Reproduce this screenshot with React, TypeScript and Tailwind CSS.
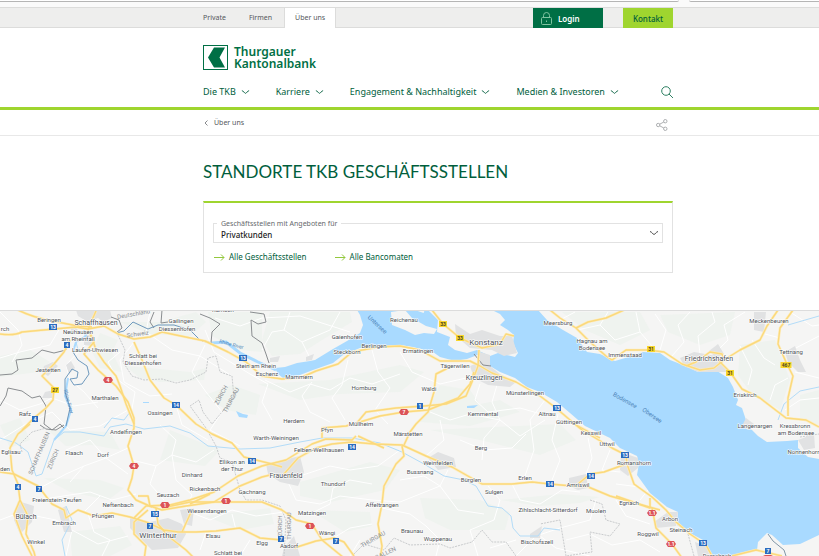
import React from "react";

type Label = { t: string; x: number; y: number; size?: number };

const navItems = [
  { name: "Die TKB" },
  { name: "Karriere" },
  { name: "Engagement & Nachhaltigkeit" },
  { name: "Medien & Investoren" },
];

// Town names, x is the centre of the text and y its baseline
const towns: Label[] = [
  { t: "Beringen", x: 49, y: 322 },
  { t: "Schaffhausen", x: 96, y: 325, size: 7 },
  { t: "rch", x: 5, y: 331 },
  { t: "Neuhausen", x: 78, y: 334 },
  { t: "am Rheinfall", x: 78, y: 341 },
  { t: "Laufen-Uhwiesen", x: 95, y: 352 },
  { t: "Gailingen", x: 181, y: 323 },
  { t: "Diessenhofen", x: 177, y: 331 },
  { t: "Schlatt bei", x: 143, y: 358 },
  { t: "Diessenhofen", x: 143, y: 365 },
  { t: "Jestetten", x: 48, y: 372 },
  { t: "Marthalen", x: 105, y: 400 },
  { t: "Rafz", x: 25, y: 416 },
  { t: "Ossingen", x: 160, y: 415 },
  { t: "Ramsen", x: 223, y: 312 },
  { t: "Stein am Rhein", x: 256, y: 368 },
  { t: "Eschenz", x: 267, y: 376 },
  { t: "Mammern", x: 299, y: 379 },
  { t: "Gaienhofen", x: 347, y: 339 },
  { t: "Steckborn", x: 347, y: 354 },
  { t: "Berlingen", x: 374, y: 348 },
  { t: "Reichenau", x: 404, y: 322 },
  { t: "Ermatingen", x: 418, y: 353 },
  { t: "Homburg", x: 364, y: 390 },
  { t: "Herdern", x: 294, y: 423 },
  { t: "Müllheim", x: 361, y: 426 },
  { t: "Pfyn", x: 327, y: 432 },
  { t: "Konstanz", x: 486, y: 345, size: 8 },
  { t: "Tägerwilen", x: 455, y: 368 },
  { t: "Kreuzlingen", x: 484, y: 380, size: 7 },
  { t: "Wäldi", x: 429, y: 391 },
  { t: "Münsterlingen", x: 525, y: 395 },
  { t: "Kemmental", x: 483, y: 416 },
  { t: "Altnau", x: 547, y: 416 },
  { t: "Güttingen", x: 569, y: 424 },
  { t: "Meersburg", x: 558, y: 325 },
  { t: "Hagnau am", x: 592, y: 343 },
  { t: "Bodensee", x: 592, y: 350 },
  { t: "Immenstaad", x: 625, y: 357 },
  { t: "Friedrichshafen", x: 709, y: 361, size: 7 },
  { t: "Meckenbeuren", x: 769, y: 323 },
  { t: "Tettnang", x: 791, y: 354 },
  { t: "Eriskirch", x: 745, y: 397 },
  { t: "Langenargen", x: 755, y: 428 },
  { t: "Kressbronn", x: 795, y: 428 },
  { t: "am Bodensee", x: 796, y: 435 },
  { t: "Nonnenhorn", x: 804, y: 454 },
  { t: "Andelfingen", x: 126, y: 434 },
  { t: "Eglisau", x: 11, y: 454 },
  { t: "den", x: 5, y: 471 },
  { t: "Flaach", x: 74, y: 455 },
  { t: "Dorf", x: 103, y: 457 },
  { t: "Dinhard", x: 192, y: 477 },
  { t: "Rickenbach", x: 205, y: 491 },
  { t: "Seuzach", x: 168, y: 497 },
  { t: "Freienstein-Teufen", x: 57, y: 502 },
  { t: "Neftenbach", x: 118, y: 507 },
  { t: "Bülach", x: 26, y: 519, size: 7 },
  { t: "Pfungen", x: 103, y: 518 },
  { t: "Embrach", x: 64, y: 525 },
  { t: "Wiesendangen", x: 207, y: 513 },
  { t: "Winterthur", x: 158, y: 538, size: 8 },
  { t: "Winkel", x: 36, y: 544 },
  { t: "Warth-Weiningen", x: 276, y: 440 },
  { t: "Felben-Wellhausen", x: 319, y: 452 },
  { t: "Märstetten", x: 408, y: 436 },
  { t: "Ellikon an", x: 232, y: 464 },
  { t: "der Thur", x: 232, y: 471 },
  { t: "Frauenfeld", x: 286, y: 478, size: 7 },
  { t: "Thundorf", x: 333, y: 486 },
  { t: "Gachnang", x: 252, y: 494 },
  { t: "Affeltrangen", x: 382, y: 507 },
  { t: "Matzingen", x: 312, y: 515 },
  { t: "Wängi", x: 327, y: 535 },
  { t: "Elsau", x: 213, y: 538 },
  { t: "Elgg", x: 262, y: 545 },
  { t: "Aadorf", x: 289, y: 548 },
  { t: "Schlatt bei", x: 228, y: 555 },
  { t: "Braunau", x: 412, y: 533 },
  { t: "Wuppenau", x: 438, y: 541 },
  { t: "Berg", x: 481, y: 450 },
  { t: "Weinfelden", x: 438, y: 465 },
  { t: "Bussnang", x: 420, y: 474 },
  { t: "Bürglen", x: 471, y: 482 },
  { t: "Erlen", x: 525, y: 480 },
  { t: "Sulgen", x: 494, y: 494 },
  { t: "Amriswil", x: 578, y: 487 },
  { t: "Zihlschlacht-Sitterdorf", x: 548, y: 512 },
  { t: "Muolen", x: 596, y: 513 },
  { t: "Bischofszell", x: 537, y: 544 },
  { t: "Kesswil", x: 591, y: 435 },
  { t: "Uttwil", x: 607, y: 446 },
  { t: "Romanshorn", x: 634, y: 465 },
  { t: "Egnach", x: 629, y: 505 },
  { t: "Arbon", x: 670, y: 521 },
  { t: "Steinach", x: 681, y: 532 },
  { t: "Roggwil", x: 648, y: 536 },
  { t: "Rorschach", x: 717, y: 558 },
];

const regions = [
  { t: "Deutschland", x: 134, y: 316, r: -10 },
  { t: "Schweiz", x: 138, y: 336, r: -8 },
  { t: "SCHAFFHAUSEN", x: 41, y: 454, r: -67 },
  { t: "ZÜRICH", x: 55, y: 460, r: -67 },
  { t: "ZÜRICH", x: 223, y: 396, r: -62 },
  { t: "THURGAU", x: 233, y: 401, r: -62 },
  { t: "ZÜRICH", x: 282, y: 526, r: -90 },
  { t: "THURGAU", x: 291, y: 526, r: -90 },
  { t: "THURGAU", x: 374, y: 541, r: -30 },
  { t: "ST. GALLEN", x: 382, y: 557, r: -25 },
];

const shields = [
  { n: "13", x: 53, y: 327, kind: "blue" },
  { n: "4", x: 67, y: 345, kind: "blue" },
  { n: "14", x: 176, y: 405, kind: "blue" },
  { n: "4", x: 35, y: 419, kind: "blue" },
  { n: "13", x: 243, y: 358, kind: "blue" },
  { n: "1", x: 420, y: 406, kind: "blue" },
  { n: "13", x: 557, y: 408, kind: "blue" },
  { n: "14", x: 252, y: 461, kind: "blue" },
  { n: "14", x: 352, y: 447, kind: "blue" },
  { n: "14", x: 550, y: 484, kind: "blue" },
  { n: "14", x: 591, y: 476, kind: "blue" },
  { n: "13", x: 625, y: 455, kind: "blue" },
  { n: "13", x: 703, y: 543, kind: "blue" },
  { n: "7", x: 768, y: 551, kind: "blue" },
  { n: "4", x: 18, y: 487, kind: "blue" },
  { n: "7", x: 39, y: 489, kind: "blue" },
  { n: "15", x: 155, y: 514, kind: "blue" },
  { n: "7", x: 150, y: 526, kind: "blue" },
  { n: "7", x: 281, y: 539, kind: "blue" },
  { n: "7", x: 336, y: 541, kind: "blue" },
  { n: "27", x: 55, y: 390, kind: "yellow" },
  { n: "33", x: 443, y: 324, kind: "yellow" },
  { n: "33", x: 460, y: 338, kind: "yellow" },
  { n: "31", x: 651, y: 349, kind: "yellow" },
  { n: "31", x: 730, y: 373, kind: "yellow" },
  { n: "467", x: 786, y: 365, kind: "yellow" },
  { n: "4", x: 108, y: 380, kind: "red" },
  { n: "7", x: 404, y: 412, kind: "red" },
  { n: "4", x: 134, y: 466, kind: "red" },
  { n: "1", x: 165, y: 505, kind: "red" },
  { n: "1", x: 226, y: 501, kind: "red" },
  { n: "1", x: 310, y: 526, kind: "red" },
  { n: "1.1", x: 652, y: 513, kind: "red" },
  { n: "1.1", x: 671, y: 544, kind: "red" },
];

const greens = [
  "M0 356L30 350L50 362L38 372L0 377Z",
  "M100 333L118 340L112 352L122 372L100 368L92 352Z",
  "M125 366L150 368L190 372L206 368L204 380L160 382L140 378Z",
  "M120 322L160 322L196 312L206 322L190 336L150 334Z",
  "M208 312L262 312L262 352L240 350L212 336Z",
  "M270 312L350 312L352 322L322 340L300 354L272 356L262 340Z",
  "M205 395L232 385L260 395L256 415L226 410Z",
  "M258 384L330 380L400 365L424 372L400 392L340 394L300 400Z",
  "M440 385L470 390L480 404L500 400L520 412L470 426L420 422Z",
  "M562 312L640 312L650 330L620 345L585 330Z",
  "M660 315L735 312L730 335L700 345L668 332Z",
  "M740 345L775 340L790 380L780 410L750 392L738 375Z",
  "M800 395L819 390L819 425L800 420Z",
  "M0 425L20 418L30 440L10 448Z",
  "M48 430L110 432L120 450L92 445L66 446Z",
  "M44 478L100 480L124 488L108 500L70 492Z",
  "M70 532L120 526L132 545L110 556L72 556Z",
  "M170 430L220 450L205 466L160 460Z",
  "M300 482L370 462L400 470L385 490L330 502L300 496Z",
  "M310 510L370 512L372 526L345 532Z",
  "M205 516L270 508L274 524L240 530Z",
  "M420 498L480 500L510 512L505 530L450 530L425 518Z",
  "M500 500L560 494L600 497L580 503L540 506Z",
  "M430 430L560 424L576 440L540 455L480 440Z",
];

const cities = [
  "M76 310L110 310L112 318L103 322L98 318L88 322L78 316Z",
  "M84 334L94 336L92 346L84 345Z",
  "M44 366L53 362L58 366L48 376L42 372Z",
  "M66 365L71 361L75 368L69 374Z",
  "M45 392L54 390L52 398L42 398Z",
  "M455 324L470 334L482 330L500 336L512 336L517 353L504 356L492 350L470 348L456 336Z",
  "M480 352L490 355L490 366L500 374L516 382L510 387L488 385L474 378L470 366L480 362Z",
  "M680 358L694 352L716 356L728 372L712 372L698 372L684 366Z",
  "M709 351L718 344L724 354L716 358Z",
  "M785 352L795 346L800 360L806 372L798 372L788 362Z",
  "M754 312L766 312L764 332L754 330Z",
  "M18 501L34 506L32 522L20 534L14 520Z",
  "M130 516L150 522L168 518L182 524L186 534L178 548L152 550L140 538L130 528Z",
  "M180 510L194 508L192 526L184 524Z",
  "M58 510L66 506L72 532L64 532Z",
  "M266 464L300 456L304 472L298 486L280 482L268 474Z",
  "M284 548L294 536L300 556L282 556Z",
  "M428 458L438 452L454 458L456 467L438 470Z",
  "M569 478L586 474L588 488L578 490L569 486Z",
  "M621 452L638 458L638 468L628 476L620 470Z",
  "M654 522L668 512L678 512L676 526L656 528Z",
  "M530 534L542 526L540 538L530 538Z",
  "M695 542L706 546L710 556L698 556Z",
  "M798 440L814 434L815 448L804 450Z",
  "M746 418L754 424L748 430L742 426Z",
  "M72 324L78 330L70 334Z",
  "M270 358L280 356L278 362L270 362Z",
  "M306 357L314 354L312 360L306 361Z",
];

const minorRoads = [
  "M0 312L18 330L22 345L12 362",
  "M60 328L50 345L20 352L0 358",
  "M85 345L66 365L70 380L84 392L98 408",
  "M120 352L108 362L118 380L135 392L130 420",
  "M134 342L120 360L124 382L150 396L172 394",
  "M150 312L146 332L172 350L200 356L232 376",
  "M205 330L214 352L250 374L268 384L262 402L272 420",
  "M205 345L192 372L206 392L222 412L210 430L240 446",
  "M265 380L290 392L310 384L330 390L350 378L372 384L400 374",
  "M312 382L302 396L310 412L330 422",
  "M348 360L342 385L332 398L345 420",
  "M372 350L378 372L390 388L375 410L388 424",
  "M400 352L412 372L440 384L466 378",
  "M262 350L272 332L284 330L302 342L310 358",
  "M215 318L240 326L262 318L300 316L350 332",
  "M284 330L290 312M302 342L330 330L340 312",
  "M480 384L475 400L488 412L520 408L548 416",
  "M497 385L492 402L500 420L484 438L482 460",
  "M430 412L450 420L470 414L500 420L520 436L545 420",
  "M545 400L530 420L534 450L525 476",
  "M558 414L552 440L560 460L552 480",
  "M588 438L592 458L586 474",
  "M610 450L602 470L620 472",
  "M560 320L575 312M577 330L600 325L615 340L640 332L652 346",
  "M600 325L608 312M640 332L636 312M660 350L666 330L655 314",
  "M672 356L684 342L678 325L690 312",
  "M700 354L698 336L715 322L712 312",
  "M714 354L728 340L724 325L745 312",
  "M752 340L764 358L775 365M740 346L752 370L748 385",
  "M765 334L780 338M790 312L812 326L819 325M792 350L819 336",
  "M795 372L819 378M785 410L800 400L819 398M770 400L775 385L788 378",
  "M0 400L20 410L40 404L52 398L74 406L98 402",
  "M0 440L26 424L52 412L70 430L100 426L128 410",
  "M66 450L90 440L106 458L128 448",
  "M70 482L84 466L106 458L128 474M40 488L66 474L84 466",
  "M50 498L90 492L112 500L136 494M84 512L100 496",
  "M0 520L16 514M26 514L56 520L72 530L66 556M72 530L98 544L128 536",
  "M88 514L94 532L110 540L102 556",
  "M132 460L156 466L172 455L196 462L214 450",
  "M156 466L150 484L164 500M172 455L176 480L192 495L186 508",
  "M160 425L176 440L172 455M176 405L182 425L208 440",
  "M190 512L210 520L232 510L256 516L284 512",
  "M236 530L232 514M206 532L200 550M250 540L240 556",
  "M288 482L296 500L320 504L340 496L372 500",
  "M300 476L330 466L350 470L378 466L400 450",
  "M333 488L350 480L372 484M333 488L330 504L314 512",
  "M372 500L400 502L420 494L440 486L448 470",
  "M382 508L410 514L426 526L440 540L436 556",
  "M400 480L424 476L440 486L458 510L484 514",
  "M488 486L500 500L494 520L470 530L478 556",
  "M512 484L520 500L540 504L562 490L580 492",
  "M460 440L484 450L512 448L526 434M426 456L444 440L440 420",
  "M596 500L590 520L560 528L536 536L516 556",
  "M616 484L640 487M616 500L626 516L650 524M640 500L648 490",
  "M566 540L590 534L612 545L640 540L660 552",
  "M330 540L350 528L372 524M350 556L360 540",
  "M540 536L556 548L590 556M516 540L490 548",
];

const highways = [
  "M18 310Q32 317 52 321L78 326L92 327",
  "M0 334Q14 336 22 332L76 327L88 329L104 326L118 334L134 339L150 337L162 332L176 335L205 341L228 352L246 362L262 376L282 379L300 378L316 371L338 364L352 352L378 347L400 346L420 350L440 361L470 361L480 366L492 373L516 382L540 396L556 408L570 420L582 430L612 448L626 455L627 464L634 484L652 497L666 510L676 522L690 534L706 545L712 556",
  "M96 311L92 320L88 330L94 342L84 354L98 370L116 386L128 402L134 418L134 428L128 446L134 466L132 478L128 490L136 500L152 507",
  "M90 332L96 350L104 362L116 376L120 386L126 404L134 424",
  "M134 342L142 360L150 380L164 398L176 405L196 424L212 434L232 443L244 457L272 464L282 467",
  "M70 340L64 352L54 364L42 376L54 388L53 400L46 408L34 418L22 430",
  "M30 424L18 434L10 448L12 470L18 484L20 500L28 516L26 534L34 552L36 560",
  "M0 472L14 474L38 486L52 504L64 510L66 518L78 510L94 516L112 513L130 517L146 522L164 530L178 532L196 532L216 531L240 528L260 538L282 540",
  "M20 500L14 514L22 536L32 556",
  "M134 518L146 506L170 505L190 500L214 492L238 476L262 466L286 460L312 444L326 439L352 440L356 436",
  "M148 510L134 522L134 534L146 546L144 560",
  "M156 508L158 524L168 536L186 550L196 560",
  "M138 496L148 496L150 506L162 510L186 506L214 502L240 486L262 477L274 474",
  "M162 508L190 502L226 502L262 502L282 510L296 520L312 524L322 540L344 558",
  "M284 474L298 458L316 448L332 444L352 442L374 444L402 445L426 456L452 467L482 484L512 484L532 482L550 484L572 486L586 486L610 496L660 510",
  "M322 438L322 428L346 426L360 422L380 416L404 412L428 410L458 398L470 384L474 372",
  "M358 436L384 448M356 424L366 412L396 408L424 406L446 404L466 396L472 382L478 366L479 350",
  "M404 445L410 432L416 424L428 412L434 392L436 374L452 366",
  "M402 446L404 456L396 464L384 486L382 504L378 524L382 546L380 560",
  "M578 484L590 474L604 472L626 464",
  "M616 496L650 508L650 498M652 508L656 528L672 544L682 558",
  "M432 310L443 324L460 338L482 348L500 344L506 334L514 336",
  "M550 310L560 318L576 328L590 342L606 356L612 360L626 350L648 350L664 352L682 364L700 370L714 368L724 360L722 354L710 352L696 362L686 366",
  "M576 328L588 322L606 318L624 310",
  "M718 360L730 372L742 389L760 398L786 418L806 420L819 427",
  "M724 360L740 350L760 340L767 326L778 310",
  "M793 310L780 328L778 344L786 362L793 376L788 398L788 416",
  "M294 548L316 541L334 538L344 542L354 556",
  "M732 556L756 550L782 556",
  "M576 425L600 438",
  "M190 504L210 494M182 532L192 510",
];

// Shared chevron used by the main nav and the select
const Chevron = ({ className }: { className?: string }) => (
  <svg viewBox="0 0 10 6" className={className} fill="none" stroke="currentColor" aria-hidden="true">
    <path d="M1 1.5C3 2 4 4.5 5 4.5S7 2 9 1.5" strokeWidth="1" />
  </svg>
);

const Arrow = () => (
  <svg viewBox="0 0 11 8" className="h-2 w-[11px] text-[#93c83d]" fill="none" stroke="currentColor" aria-hidden="true">
    <path d="M0 4.5H10M7 1.5L10 4.5L7 7.5" strokeWidth="1" />
  </svg>
);

const Logo = () => (
  <a href="#" className="flex w-fit items-center gap-[6px] text-[#006f45]">
    <svg viewBox="0 0 25 25" className="size-[25px]" aria-hidden="true">
      <rect x="0.5" y="0.5" width="24" height="24" fill="white" stroke="currentColor" />
      <path d="M11 2.5H22L16.5 12.5L22 22.5H11L5 12.5Z" fill="currentColor" />
    </svg>
    <span className="text-[12px] leading-[12px] font-semibold">
      <span className="block">Thurgauer</span>
      <span className="block">Kantonalbank</span>
    </span>
  </a>
);

function Shield({ n, x, y, kind }: { n: string; x: number; y: number; kind: string }) {
  const w = n.length > 2 ? 11 : n.length > 1 ? 8 : 6;
  return (
    <g>
      {kind === "red" ? (
        <path d={`M${x - 5} ${y}l2 -3h6l2 3l-2 3h-6Z`} fill="#dc5358" />
      ) : (
        <rect x={x - w / 2} y={y - 3} width={w} height="6" fill={kind === "blue" ? "#2b6cbf" : "#f8d62c"} />
      )}
      <text x={x} y={y + 2} textAnchor="middle" fontSize="5" fontWeight="700" fill={kind === "yellow" ? "#4b4520" : "#ffffff"}>
        {n}
      </text>
    </g>
  );
}

const BankMap = () => (
  <svg
    viewBox="0 310 819 246"
    className="block h-auto w-full bg-[#f5f5f4] font-[Roboto,sans-serif]"
    role="img"
    aria-label="Karte"
  >
    <g fill="#eff3ef">
      {greens.map((d) => (
        <path key={d} d={d} />
      ))}
    </g>
    <g fill="none" stroke="#ffffff" strokeWidth="1">
      {minorRoads.map((d) => (
        <path key={d} d={d} />
      ))}
    </g>

    {/* Lakes */}
    <g fill="#a9daff">
      <path d="M275 368L285 367L297 363L310 361L315 360L333 349L347 341L360 333L363 325L360 315L357 310H428L438 320L437 332L450 337L448 345L455 350L467 353L477 350L490 356L498 353L515 357L518 353L513 343L514 335L508 330L500 325L505 320L500 314L492 310H538L547 320L563 330L577 338L587 352L600 354L615 361L625 358L643 352L660 353L670 360L683 365L698 372L717 371L728 378L733 387L738 400L736 405L742 408L746 420L743 426L752 430L758 436L767 442L787 441L798 440L798 448L808 457L819 459V535L800 544L783 545L772 535L767 533L758 542L757 550L733 555H710L703 540L688 532L677 525L678 512L667 507L650 493L637 475L639 463L637 456L620 448L610 438L585 426L570 413L557 402L540 392L527 387L515 378L500 372L490 366L489 358L480 354L467 359L455 361L440 357L433 352L413 347L400 345L387 346L360 348L343 355L333 363L313 370L300 375L283 378L278 374Z" />
      <path d="M236 411L243 414L248 415L247 418L239 417ZM143 402H149V403H143ZM467 406L478 405L474 408H467Z" />
    </g>
    <path d="M391 312L405 310L412 318L426 326L437 329L434 334L424 333L415 335L405 330L392 325Z" fill="#f5f5f4" />
    <path d="M432 310L438 318L450 324M418 310L424 312" fill="none" stroke="#f5f5f4" strokeWidth="2" />
    <g fill="#e1e2e3">
      {cities.map((d) => (
        <path key={d} d={d} />
      ))}
    </g>

    {/* Rivers */}
    <g fill="none" stroke="#b3dcf8" strokeWidth="1">
      <path d="M0 438L16 443L28 452L36 476L42 474L54 440L64 432L80 432L104 436L110 427L126 424L144 429L170 426L190 433L208 446L240 449L270 448L300 442L322 438L352 438L380 443L402 452L424 464L444 476L464 480L476 486L488 506L502 508L511 516L513 528L520 536L538 536L544 528L560 530" />
      <path d="M104 428L112 418L124 420L130 412M778 420L784 404L800 391L819 387M788 325L819 316" />
      <path d="M84 338L76 342L78 350M65 556L62 540L72 520L66 506" />
    </g>
    <path d="M212 343L226 342L240 353L258 362L276 370" fill="none" stroke="#a9daff" strokeWidth="3" />
    <path d="M84 330L86 336L76 342L73 352" fill="none" stroke="#a9daff" strokeWidth="2" />
    <path d="M68 378L65 396L71 410L66 426L54 440" fill="none" stroke="#a9daff" strokeWidth="2" />

    {/* National border */}
    <g fill="none" stroke="#8a8d90" strokeWidth="1">
      <path d="M0 375L12 374L18 370L16 360L32 358L42 350L54 353L66 350L68 344" />
      <path d="M0 406L6 396L8 388L22 391L32 398L40 396L46 406L44 424L52 430L60 424L64 428" />
      <path d="M111 317L119 320L122 328L116 333" />
      <path d="M154 312L150 322L154 328M162 310L161 323L168 322" />
      <path d="M250 312L264 314L266 322L258 324L251 320L252 336L262 343L266 354L269 363" />
      <path d="M200 314L210 318L220 324L212 332L211 343L202 341" />
      <path d="M474 354L483 365L491 366" />
      <path d="M40 425L46 429L56 430L64 425" />
    </g>
    <path
      d="M73 352L78 360L87 366L89 374L82 384L74 385L70 379L77 378L78 372L72 369L65 379L65 392L70 408L66 426M116 333L124 331L133 322L148 329L158 325L174 325L190 330L200 340L212 343"
      fill="none"
      stroke="#6f99bd"
      strokeWidth="1"
    />
    <path d="M768 534L773 541L784 550L786 556" fill="none" stroke="#8297a8" strokeWidth="1" />

    {/* Canton borders */}
    <g fill="none" stroke="#c9cbcd" strokeWidth="1" strokeDasharray="2 1">
      <path d="M118 335L125 350L123 362L132 376L144 380L162 379L176 383L190 380L206 372L208 358L216 356L220 372L232 376L234 398L222 412L212 424L203 412L199 400L190 406L206 428L216 446L220 458L232 462L240 490L246 500L262 500L280 506L286 520L284 556" />
      <path d="M352 556L364 544L384 550L394 538L410 545L440 544L450 548L472 542L482 530L492 542L506 542L516 556" />
      <path d="M22 452L20 444L32 432L46 428M590 500L602 504L606 520L620 524L610 536L590 532L592 552L566 556L560 520L540 524M688 534L694 556" />
      <path d="M800 437L819 434" />
    </g>

    {/* Main roads, drawn twice for the casing */}
    <g fill="none" stroke="#fdedc0" strokeWidth="2.6" strokeLinejoin="round">
      {highways.map((d) => (
        <path key={d} d={d} />
      ))}
    </g>
    <g fill="none" stroke="#fbd97c" strokeWidth="1.4" strokeLinejoin="round">
      {highways.map((d) => (
        <path key={d} d={d} />
      ))}
    </g>

    <g textAnchor="middle" fill="#4d5156" stroke="#ffffff" strokeWidth="1.2" strokeLinejoin="round" paintOrder="stroke">
      {towns.map((l) => (
        <text key={`${l.x}-${l.y}`} x={l.x} y={l.y} fontSize={l.size ?? 6}>
          {l.t}
        </text>
      ))}
    </g>
    <g textAnchor="middle" fontSize="6" fill="#888c91">
      {regions.map((l) => (
        <text key={`${l.x}-${l.y}`} x={l.x} y={l.y} transform={`rotate(${l.r} ${l.x} ${l.y})`}>
          {l.t}
        </text>
      ))}
    </g>
    <g textAnchor="middle" fill="#4c83b8">
      <text x="376" y="326" fontSize="6" transform="rotate(43 376 326)">Untersee</text>
      <text x="624" y="402" fontSize="6" transform="rotate(29 624 402)">Bodensee</text>
      <text x="651" y="417" fontSize="6" transform="rotate(34 651 417)">Obersee</text>
      <text x="231" y="346" fontSize="5" transform="rotate(15 231 346)">Rhine River</text>
      <text x="67" y="402" fontSize="5" transform="rotate(75 67 402)">Rhine River</text>
    </g>
    {shields.map((s) => (
      <Shield key={`${s.x}-${s.y}`} {...s} />
    ))}
    <path d="M763 556l2 -1h6l2 1Z" fill="#dc5358" />
    <path d="M0 310.5H819" stroke="#dcdcdc" strokeWidth="1" />
  </svg>
);

export default function App() {
  return (
    <div className="w-full bg-white font-['Noto_Sans',sans-serif] text-[#005e3c]">
      {/* Bottom edge of the browser chrome */}
      <div className="flex h-[7px] gap-[10px] bg-[#fafafa]">
        <div className="h-[2px] flex-1 rounded-br border-b border-[#b5b5b5] bg-white" />
        <div className="h-[2px] w-[130px] rounded-bl border-b border-[#b5b5b5] bg-white" />
      </div>

      <header>
        <div className="flex h-[21px] items-stretch border-y border-[#dcdcdb] bg-[#eeeeed] pr-[146px] pl-[203px] text-[7px] text-[#55585c]">
          <nav className="flex items-stretch gap-[23px] pt-px">
            <a href="#" className="flex items-center">Private</a>
            <a href="#" className="flex items-center">Firmen</a>
            <a href="#" className="-mt-px -mb-px -ml-[11px] flex items-center border-x border-[#dcdcdb] bg-white px-[10px] pt-px">
              Über uns
            </a>
          </nav>
          <div className="-mb-px ml-auto flex gap-5">
            <button className="flex w-[70px] items-center gap-[6px] bg-[#006f45] pl-2 text-[8px] font-semibold text-white">
              <svg viewBox="0 0 11 13" className="h-[13px] w-[11px]" fill="none" stroke="#7fc3a0" aria-hidden="true">
                <rect x="0.5" y="5.5" width="10" height="7" rx="1" />
                <path d="M2.5 5.5V3.5a3 3 0 0 1 6 0V5.5M5.5 8.5V10" />
              </svg>
              <span className="pt-px">Login</span>
            </button>
            <button className="w-[50px] bg-[#9fd52f] pt-px text-[8px] font-medium text-[#005e3c]">Kontakt</button>
          </div>
        </div>

        <div className="border-b-[3px] border-[#9fd52f] pt-[17px] pr-[146px] pl-[203px]">
          <Logo />
          <div className="flex h-[37px] items-center justify-between pt-[6px]">
            <nav className="flex items-center gap-[26px] text-[9px]">
              {navItems.map((item) => (
                <a key={item.name} href="#" className="flex items-center gap-[5px] whitespace-nowrap">
                  {item.name}
                  <Chevron className="h-[6px] w-[9px]" />
                </a>
              ))}
            </nav>
            <button aria-label="Suche">
              <svg viewBox="0 0 12 12" className="size-3" fill="none" stroke="#2f8063" aria-hidden="true">
                <circle cx="5" cy="5" r="4.3" />
                <path d="M8 8L12 12" />
              </svg>
            </button>
          </div>
        </div>

        <div className="flex h-[26px] items-center justify-between border-b border-[#e8e8e8] pr-[151px] pl-[204px]">
          <a href="#" className="flex items-center gap-[6px] text-[7px] text-[#55585c]">
            <svg viewBox="0 0 4 7" className="h-[7px] w-1" fill="none" stroke="currentColor" aria-hidden="true">
              <path d="M3.5 1.5L1 4L3.5 6.5" strokeWidth="0.7" />
            </svg>
            <span className="pt-px">Über uns</span>
          </a>
          <button aria-label="Teilen" className="pt-1">
            <svg viewBox="0 0 12 12" className="size-3" fill="none" stroke="#9a9d9f" strokeWidth="0.8" aria-hidden="true">
              <circle cx="2.2" cy="6" r="1.7" />
              <circle cx="9.3" cy="2.2" r="1.7" />
              <circle cx="9.3" cy="9.8" r="1.7" />
              <path d="M3.7 5.2L7.8 3M3.7 6.8L7.8 9" />
            </svg>
          </button>
        </div>
      </header>

      <main>
        <div className="pt-6 pr-[146px] pb-[37px] pl-[203px]">
          <h1 className="font-[Lato,sans-serif] text-[17px] leading-6">STANDORTE TKB GESCHÄFTSSTELLEN</h1>

          <section className="mt-[17px] border border-t-2 border-[#e2e2e2] border-t-[#9fd52f] px-[9px] pt-5 pb-[9px]">
            <div className="relative">
              <label htmlFor="angebot" className="absolute -top-[4px] left-1 bg-white px-1 text-[7px] leading-[9px] text-[#66696d]">
                Geschäftsstellen mit Angeboten für
              </label>
              <select
                id="angebot"
                className="block h-5 w-full appearance-none border border-[#e2e2e2] bg-white px-[7px] pt-[3px] text-[8px] font-medium text-[#1c1c1c]"
              >
                <option>Privatkunden</option>
                <option>Geschäftskunden</option>
              </select>
              <Chevron className="pointer-events-none absolute top-[7px] right-1 h-[6px] w-[10px] text-[#444]" />
            </div>
            <div className="mt-2 flex gap-7 pl-px text-[8px] leading-3">
              <a href="#" className="flex items-center gap-1">
                <Arrow />
                Alle Geschäftsstellen
              </a>
              <a href="#" className="flex items-center gap-1">
                <Arrow />
                Alle Bancomaten
              </a>
            </div>
          </section>
        </div>

        <BankMap />
      </main>
    </div>
  );
}
